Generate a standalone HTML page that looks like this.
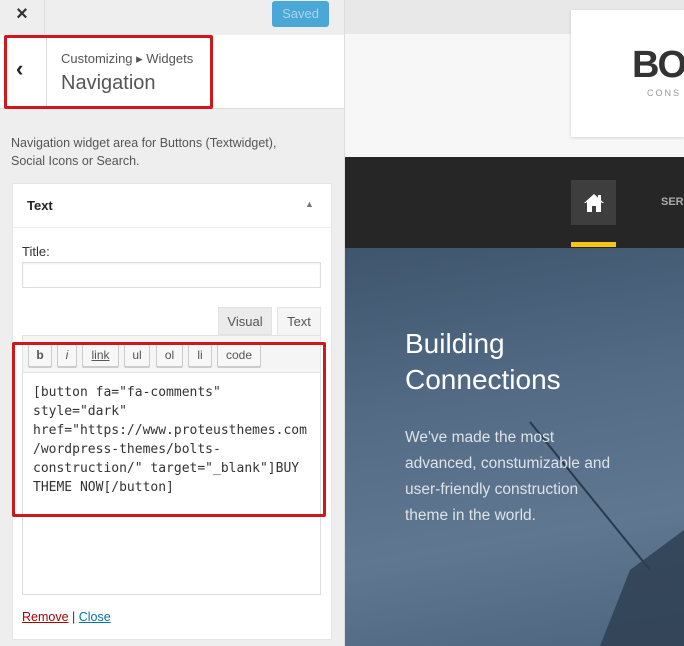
<!DOCTYPE html>
<html><head><meta charset="utf-8"><style>
*{margin:0;padding:0;box-sizing:border-box}
body{width:684px;height:646px;overflow:hidden;position:relative;font-family:"Liberation Sans","DejaVu Sans",sans-serif;background:#eee}
.a{position:absolute}
.mono{font-family:"DejaVu Sans Mono","Liberation Mono",monospace}
.btn{position:absolute;top:344px;height:23px;border:1px solid #ccc;background:#f7f7f7;border-radius:2px;font-size:12px;color:#555;text-align:center;line-height:21px;box-shadow:0 1px 0 #ccc}
</style></head><body>
<div class="a" style="left:0;top:0;width:345px;height:646px;background:#eee;border-right:1px solid #ddd"></div>
<div class="a" style="left:0;top:0;width:45px;height:34px;border-right:1px solid #ddd;font-size:20px;color:#333;text-align:center;line-height:28px;font-weight:bold">×</div>
<div class="a" style="left:272px;top:1px;width:57px;height:26px;background:#4aa7d6;border-radius:3px;color:#a9d6ee;font-size:13px;text-align:center;line-height:26px">Saved</div>
<div class="a" style="left:0;top:35px;width:344px;height:74px;background:#fff;border-bottom:1px solid #ddd"></div>
<div class="a" style="left:46px;top:36px;width:1px;height:72px;background:#ddd"></div>
<div class="a" style="left:16px;top:56px;font-size:22px;color:#222;font-weight:bold">‹</div>
<div class="a" style="left:61px;top:51px;font-size:13px;color:#555">Customizing ▸ Widgets</div>
<div class="a" style="left:61px;top:72px;font-size:20px;color:#555">Navigation</div>
<div class="a" style="left:4px;top:35px;width:209px;height:74px;border:3px solid #d0171b;border-radius:2px"></div>
<div class="a" style="left:11px;top:134px;font-size:12.5px;color:#555;line-height:18px;width:330px">Navigation widget area for Buttons (Textwidget),<br>Social Icons or Search.</div>
<div class="a" style="left:12px;top:183px;width:320px;height:457px;background:#fff;border:1px solid #e5e5e5"></div>
<div class="a" style="left:12px;top:183px;width:320px;height:45px;border-bottom:1px solid #eee"></div>
<div class="a" style="left:27px;top:198px;font-size:13px;font-weight:bold;color:#222">Text</div>
<div class="a" style="left:305px;top:199px;font-size:9px;color:#777">▲</div>
<div class="a" style="left:22px;top:244px;font-size:13px;color:#333">Title:</div>
<div class="a" style="left:22px;top:262px;width:299px;height:26px;border:1px solid #ddd;box-shadow:inset 0 1px 2px rgba(0,0,0,.07)"></div>
<div class="a" style="left:218px;top:307px;width:54px;height:28px;background:#ebebeb;border:1px solid #e3e3e3;font-size:13px;color:#555;text-align:center;line-height:27px">Visual</div>
<div class="a" style="left:277px;top:307px;width:44px;height:28px;background:#f5f5f5;border:1px solid #e3e3e3;border-bottom:none;font-size:13px;color:#555;text-align:center;line-height:27px">Text</div>
<div class="a" style="left:22px;top:335px;width:299px;height:38px;background:#f5f5f5;border:1px solid #e3e3e3"></div>
<div class="btn" style="left:28px;width:24px;font-weight:bold">b</div>
<div class="btn" style="left:57px;width:20px;font-style:italic">i</div>
<div class="btn" style="left:82px;width:37px;text-decoration:underline">link</div>
<div class="btn" style="left:124px;width:26px">ul</div>
<div class="btn" style="left:156px;width:27px">ol</div>
<div class="btn" style="left:188px;width:24px">li</div>
<div class="btn" style="left:217px;width:44px">code</div>
<div class="a" style="left:22px;top:373px;width:299px;height:222px;border:1px solid #ddd;border-top:none"></div>
<div class="a mono" style="left:33px;top:383px;font-size:13px;line-height:19px;color:#333;white-space:pre">[button fa="fa-comments"
style="dark"
href="https://www.proteusthemes.com
/wordpress-themes/bolts-
construction/" target="_blank"]BUY
THEME NOW[/button]</div>
<div class="a" style="left:12px;top:342px;width:314px;height:175px;border:3px solid #d0171b;border-radius:2px"></div>
<div class="a" style="left:22px;top:610px;font-size:12.5px;color:#333"><span style="color:#a00;text-decoration:underline">Remove</span> | <span style="color:#0073aa;text-decoration:underline">Close</span></div>
<div class="a" style="left:345px;top:0;width:339px;height:34px;background:#e8e8e8"></div>
<div class="a" style="left:345px;top:34px;width:339px;height:123px;background:#f7f7f7"></div>
<div class="a" style="left:571px;top:10px;width:113px;height:127px;background:#fff;box-shadow:0 1px 3px rgba(0,0,0,.15)"></div>
<div class="a" style="left:632px;top:44px;font-size:38px;font-weight:900;color:#333;letter-spacing:-2px">BO</div>
<div class="a" style="left:647px;top:88px;font-size:9px;color:#999;letter-spacing:2px">CONS</div>
<div class="a" style="left:345px;top:157px;width:339px;height:91px;background:#262626"></div>
<div class="a" style="left:571px;top:180px;width:45px;height:45px;background:#3e3e3e"></div>
<svg class="a" style="left:583px;top:193px" width="22" height="20" viewBox="0 0 22 20"><path d="M11 1 L1 10 L3 10 L4 9 L4 19 L9 19 L9 13 L13 13 L13 19 L18 19 L18 9 L19 10 L21 10 Z" fill="#fff"/><rect x="15" y="2" width="3" height="5" fill="#fff"/></svg>
<div class="a" style="left:571px;top:242px;width:45px;height:5px;background:#f5c518"></div>
<div class="a" style="left:661px;top:196px;font-size:11px;font-weight:bold;color:#aaa">SER</div>
<div class="a" style="left:345px;top:248px;width:339px;height:398px;background:linear-gradient(170deg,#3f556e 0%,#546c86 40%,#5f7791 70%,#4e6580 100%)"></div>
<svg class="a" style="left:520px;top:420px" width="164" height="226"><path d="M10 2 L130 150" stroke="#2a3a4c" stroke-width="2"/><path d="M164 110 L110 150 L80 226 L164 226 Z" fill="#2f3f52" opacity=".85"/></svg>
<div class="a" style="left:405px;top:326px;font-size:28px;color:#fff;line-height:36px;font-weight:300">Building<br>Connections</div>
<div class="a" style="left:405px;top:425px;font-size:15.5px;color:#dde3ea;line-height:26px">We've made the most<br>advanced, constumizable and<br>user-friendly construction<br>theme in the world.</div>
</body></html>
